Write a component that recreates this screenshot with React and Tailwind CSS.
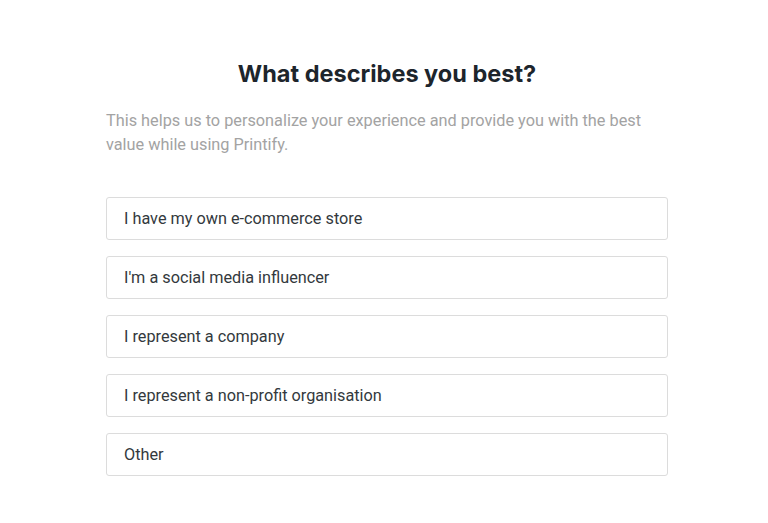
import React from "react";

const options = [
  "I have my own e-commerce store",
  "I'm a social media influencer",
  "I represent a company",
  "I represent a non-profit organisation",
  "Other",
];

export default function App() {
  return (
    <div className="min-h-[523px] w-full bg-white">
      <div className="ml-[106px] w-[562px] pt-[57px]">
        <h1
          className="text-center text-[23.5px] leading-[34px] font-bold text-[#1d252c]"
          style={{ fontFamily: "Inter, 'Liberation Sans', sans-serif" }}
        >
          What describes you best?
        </h1>
        <p
          className="mt-[18px] text-[16.3px] leading-[24px] text-[#a3a3a3]"
          style={{ fontFamily: "Roboto, 'Liberation Sans', sans-serif" }}
        >
          This helps us to personalize your experience and provide you with the best value while using Printify.
        </p>
        <div className="mt-[40px] flex flex-col gap-[16px]">
          {options.map((o) => (
            <button
              key={o}
              className="flex h-[43px] w-full items-center rounded-[3px] border border-[#dcdcdc] bg-white px-[17px] pt-[2px] text-left text-[16.25px] text-[#33393d]"
              style={{ fontFamily: "Roboto, 'Liberation Sans', sans-serif" }}
            >
              {o}
            </button>
          ))}
        </div>
      </div>
    </div>
  );
}
